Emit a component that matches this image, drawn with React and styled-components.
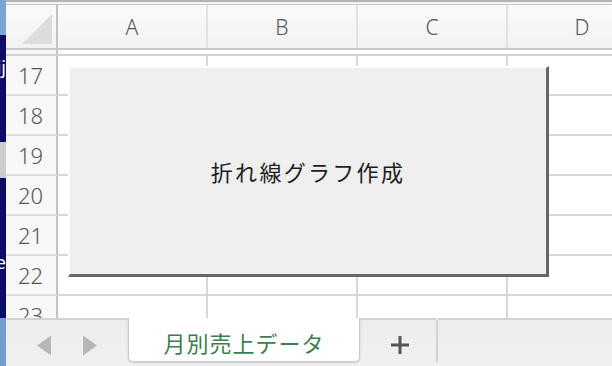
import React from 'react'
import styled, { createGlobalStyle } from 'styled-components'

const GlobalStyle = createGlobalStyle`
  html, body {
    margin: 0;
    padding: 0;
    background: #ffffff;
  }
  body {
    font-family: "Noto Sans", "Noto Sans CJK JP", sans-serif;
  }
`

const columns = ['A', 'B', 'C', 'D']
const rows = [17, 18, 19, 20, 21, 22, 23]

const App = () => {
  return (
    <Window>
      <GlobalStyle />
      <SideStrip>
        <StripBlock $bg="#79a6d4" $h={35} />
        <StripBlock $bg="#0c0c6a" $h={107}>
          <StripText $top={22}>ij</StripText>
        </StripBlock>
        <StripBlock $bg="#cdcdcd" $h={36} />
        <StripBlock $bg="#0c0c6a" $h={140}>
          <StripText $top={74}>e</StripText>
        </StripBlock>
        <StripBlock $bg="#6f9fd0" $h={48} />
      </SideStrip>

      <Sheet>
        <TopEdge />
        <HeaderRow>
          <Corner>
            <svg width="30" height="30" viewBox="0 0 30 30">
              <polygon points="30,0 30,30 0,30" fill="#dcdcdc" />
            </svg>
          </Corner>
          {columns.map(c => (
            <ColHead key={c}>{c}</ColHead>
          ))}
        </HeaderRow>
        <FreezeGap>
          <GapHead />
          <GapCells />
        </FreezeGap>

        <Body>
          {rows.map(r => (
            <Row key={r}>
              <RowHead>{r}</RowHead>
              {columns.map(c => (
                <Cell key={c} />
              ))}
            </Row>
          ))}
          <ChartButton>折れ線グラフ作成</ChartButton>
        </Body>

        <TabBar>
          <NavArea>
            <Arrow viewBox="0 0 14 20">
              <polygon points="14,0 14,20 0,10" />
            </Arrow>
            <Arrow viewBox="0 0 14 20">
              <polygon points="0,0 0,20 14,10" />
            </Arrow>
          </NavArea>
          <SheetTab>月別売上データ</SheetTab>
          <AddArea>
            <svg width="20" height="20" viewBox="0 0 20 20">
              <rect x="8.5" y="1" width="3" height="18" fill="#555" />
              <rect x="1" y="8.5" width="18" height="3" fill="#555" />
            </svg>
          </AddArea>
          <TabDivider />
          <TabRest />
        </TabBar>
      </Sheet>
    </Window>
  )
}

const Window = styled.div`
  width: 612px;
  height: 366px;
  display: flex;
  overflow: hidden;
  background: #fff;
`

const SideStrip = styled.div`
  width: 6px;
  flex: none;
  display: flex;
  flex-direction: column;
`

const StripBlock = styled.div`
  height: ${p => p.$h}px;
  background: ${p => p.$bg};
  display: flex;
  justify-content: flex-end;
  align-items: flex-start;
  overflow: hidden;
`

const StripText = styled.span`
  margin-top: ${p => p.$top}px;
  color: #fff;
  font-size: 18px;
  line-height: 20px;
  white-space: nowrap;
`

const Sheet = styled.div`
  flex: 1;
  display: flex;
  flex-direction: column;
  overflow: hidden;
`

const TopEdge = styled.div`
  height: 2px;
  border-top: 2px solid #b4b4b4;
  border-bottom: 1px solid #c9c9c9;
  background: #f3f3f3;
`

const HeaderRow = styled.div`
  height: 43px;
  display: grid;
  grid-template-columns: 52px repeat(4, 150px);
  background: linear-gradient(#fbfbfb, #f2f2f2);
  border-bottom: 2px solid #c6c6c6;
`

const Corner = styled.div`
  border-right: 2px solid #c2c2c2;
  display: flex;
  align-items: flex-end;
  justify-content: flex-end;
  padding: 0 4px 4px 0;
  box-sizing: border-box;
`

const ColHead = styled.div`
  display: flex;
  align-items: center;
  justify-content: center;
  border-right: 2px solid #e2e2e2;
  color: #555;
  font-size: 21px;
  font-weight: 300;
  box-sizing: border-box;
`

const FreezeGap = styled.div`
  height: 4px;
  display: grid;
  grid-template-columns: 52px 1fr;
  border-bottom: 2px solid #d2d2d2;
`

const GapHead = styled.div`
  background: #f8f8f8;
  border-right: 2px solid #c2c2c2;
`

const GapCells = styled.div`
  background: #ffffff;
`

const Body = styled.div`
  position: relative;
  height: 262px;
  overflow: hidden;
`

const Row = styled.div`
  height: 40px;
  display: grid;
  grid-template-columns: 52px repeat(4, 150px);
`

const RowHead = styled.div`
  background: #f8f8f8;
  border-right: 2px solid #c2c2c2;
  border-bottom: 2px solid #dedede;
  box-sizing: border-box;
  display: flex;
  align-items: center;
  justify-content: flex-end;
  padding-right: 13px;
  color: #555;
  font-size: 22px;
  font-weight: 300;
`

const Cell = styled.div`
  border-right: 2px solid #d7d7d7;
  border-bottom: 2px solid #d7d7d7;
  box-sizing: border-box;
`

const ChartButton = styled.div`
  position: absolute;
  top: 10px;
  left: 62px;
  width: 481px;
  height: 211px;
  box-sizing: border-box;
  background: #efefef;
  border-top: 2px solid #ffffff;
  border-left: 2px solid #ffffff;
  border-right: 3px solid #666;
  border-bottom: 3px solid #666;
  display: flex;
  align-items: center;
  justify-content: center;
  font-family: "Noto Sans CJK JP", sans-serif;
  font-size: 22px;
  letter-spacing: 2.3px;
  color: #1e1e1e;
`

const TabBar = styled.div`
  height: 48px;
  display: flex;
  background: linear-gradient(#ececec, #f0f0f0);
`

const NavArea = styled.div`
  width: 122px;
  border-top: 2px solid #d2d2d2;
  box-sizing: border-box;
  display: flex;
  align-items: center;
  justify-content: center;
  gap: 32px;
  padding: 4px 0 0 0;
`

const Arrow = styled.svg`
  width: 14px;
  height: 21px;
  fill: #b6b6b6;
`

const SheetTab = styled.div`
  width: 232px;
  height: 44px;
  box-sizing: border-box;
  background: #fff;
  border: 1px solid #c9c9c9;
  border-top: none;
  border-radius: 0 0 5px 5px;
  box-shadow: 0 1px 2px rgba(0, 0, 0, 0.15);
  display: flex;
  align-items: center;
  justify-content: center;
  padding-top: 4px;
  color: #3b7d50;
  font-family: "Noto Sans CJK JP", sans-serif;
  font-size: 22px;
  letter-spacing: 1px;
`

const AddArea = styled.div`
  width: 76px;
  border-top: 2px solid #d2d2d2;
  box-sizing: border-box;
  display: flex;
  align-items: center;
  justify-content: center;
  padding: 4px 0 0 4px;
`

const TabDivider = styled.div`
  width: 2px;
  margin-top: 2px;
  height: 40px;
  background: #d2d2d2;
  border-top: 2px solid #d2d2d2;
`

const TabRest = styled.div`
  flex: 1;
  border-top: 2px solid #d2d2d2;
`

export default App
